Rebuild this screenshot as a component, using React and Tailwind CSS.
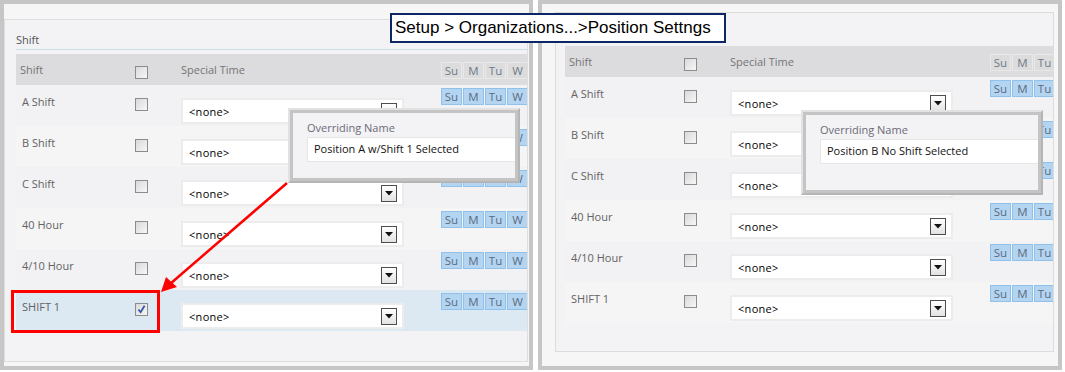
import React from "react";

const SHIFTS = ["A Shift", "B Shift", "C Shift", "40 Hour", "4/10 Hour", "SHIFT 1"];
const DAYS = ["Su", "M", "Tu", "W", "Th"];

function Check({ checked }) {
    return (
        <span className="block w-[13px] h-[13px] border border-[#8c8c8c] bg-gradient-to-br from-[#d9d9d9] to-[#f7f7f7] relative">
            {checked && (
                <svg viewBox="0 0 11 11" className="absolute inset-0 w-[11px] h-[11px]">
                    <path d="M2.5 5.5 L4.6 8.2 L8.6 1.8" fill="none" stroke="#3458a6" strokeWidth="1.8" />
                </svg>
            )}
        </span>
    );
}

function Select() {
    return (
        <div className="w-[223px] h-[26px] border-2 border-[#ececec] bg-white flex items-start justify-between">
            <span className="pl-[6px] pt-[4px] leading-[15px] text-black tracking-[0.3px]">&lt;none&gt;</span>
            <span className="mt-[3px] mr-[5px] w-[16px] h-[17px] border border-[#4d4d4d] bg-gradient-to-b from-white to-[#e2e2e2] flex items-center justify-center">
                <svg viewBox="0 0 8 5" className="w-[8px] h-[5px]">
                    <path d="M0 0 H8 L4 4.5 Z" fill="#111" />
                </svg>
            </span>
        </div>
    );
}

function Days({ header }) {
    return (
        <div className="flex gap-[1px] text-[11.5px]">
            {DAYS.map((d) => (
                <span
                    key={d}
                    className={
                        header
                            ? "w-[21px] h-[17px] leading-[15px] text-center border border-[#e9e9e9] bg-[#dcdcdc] text-[#6c7a89]"
                            : "w-[21px] h-[17px] leading-[15px] text-center border border-[#8fc1ea] bg-[#b3d5f2] text-[#5b6b7e]"
                    }
                >
                    {d}
                </span>
            ))}
        </div>
    );
}

function ShiftTable({ selected }) {
    return (
        <div className="w-[560px] text-[11px] font-['Open_Sans',sans-serif]">
            <div className="h-[31px] bg-[#dcdbdd] flex items-start text-[#757575]">
                <span className="w-[119px] pl-[4px] pt-[8px] leading-[15px]">Shift</span>
                <span className="w-[46px] mt-[12px]"><Check /></span>
                <span className="w-[260px] pt-[8px] leading-[15px]">Special Time</span>
                <span className="mt-[8px]"><Days header /></span>
            </div>
            {SHIFTS.map((s, i) => (
                <div
                    key={s}
                    className={
                        selected === i
                            ? "h-[41px] flex items-start bg-[#dce8f2]"
                            : i % 2 === 0
                            ? "h-[41px] flex items-start bg-[#f2f1f3]"
                            : "h-[41px] flex items-start bg-[#f5f5f6]"
                    }
                >
                    <span className="w-[119px] pl-[6px] pt-[9px] leading-[15px] text-[#636363]">{s}</span>
                    <span className="w-[46px] mt-[13px]"><Check checked={selected === i} /></span>
                    <span className="w-[260px] mt-[13px]"><Select /></span>
                    <span className="mt-[3px]"><Days /></span>
                </div>
            ))}
        </div>
    );
}

function Popup({ left, top, w, h, value }) {
    return (
        <div className={`absolute ${left} ${top} ${w} ${h} border-2 border-t-[#e2e2e2] border-l-[#e2e2e2] border-r-[#b5b5b5] border-b-[#b5b5b5]`}>
            <div className="w-full h-full border-[3px] border-[#c4c4c4] bg-[#f3f2f4] overflow-hidden pl-[14px] font-['Open_Sans',sans-serif] text-[11px]">
                <div className="pt-[7px] leading-[15px] text-[#6b6b78]">Overriding Name</div>
                <div className="mt-[2px] h-[25px] w-[260px] bg-white border border-[#e6e6e6] pl-[6px] leading-[22px] text-[#111]">{value}</div>
            </div>
        </div>
    );
}

export default function App() {
    return (
        <div className="relative w-[1065px] h-[372px] bg-white flex overflow-hidden">
            <div className="w-[533px] h-[370px] border-4 border-[#c6c6c6] bg-[#f6f6f7]">
                <div className="mt-[15px] mr-[1px] h-[343px] border border-[#dedede] bg-[#f3f2f4] overflow-hidden pl-[11px]">
                    <div className="h-[30px] border-b border-[#c9dceb] flex items-end pb-[2px] text-[11px] text-[#555] font-['Open_Sans',sans-serif] leading-[15px]">
                        Shift
                    </div>
                    <div className="mt-[4px] -ml-[5px] pl-[5px]">
                        <ShiftTable selected={5} />
                    </div>
                </div>
            </div>

            <div className="ml-[5px] w-[524px] h-[370px] border-4 border-[#c6c6c6] bg-[#f6f6f7]">
                <div className="ml-[13px] mt-[8px] w-[499px] h-[340px] border border-[#dcdcdc] bg-[#f3f2f4] overflow-hidden pl-[9px] pt-[33px]">
                    <ShiftTable selected={-1} />
                </div>
            </div>

            <div className="absolute left-[390px] top-[13px] w-[336px] h-[30px] border-2 border-[#0c2766] bg-white pl-[3px] font-['Liberation_Sans',Arial,sans-serif] text-[17px] leading-[26px] text-black whitespace-nowrap">
                Setup &gt; Organizations...&gt;Position Settngs
            </div>

            <Popup left="left-[288px]" top="top-[108px]" w="w-[232px]" h="h-[75px]" value="Position A w/Shift 1 Selected" />
            <Popup left="left-[801px]" top="top-[110px]" w="w-[242px]" h="h-[85px]" value="Position B No Shift Selected" />

            <div className="absolute left-[11px] top-[290px] w-[149px] h-[43px] border-[3px] border-[#ff0000]"></div>

            <svg className="absolute left-0 top-0 w-[1065px] h-[372px] pointer-events-none" viewBox="0 0 1065 372">
                <line x1="287" y1="183" x2="170" y2="284" stroke="#ff0000" strokeWidth="2.5" />
                <path d="M161 292 L166 277 L177 287 Z" fill="#ff0000" />
            </svg>
        </div>
    );
}
